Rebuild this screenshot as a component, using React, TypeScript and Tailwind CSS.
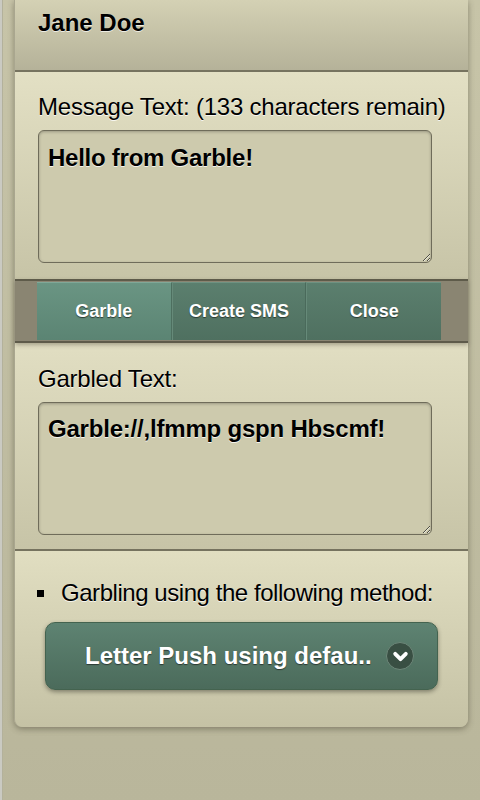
import React from "react";

const darkShadow = "[text-shadow:0_1px_1px_#2b3a33]";

function Chevron() {
  return (
    <div className="w-[28px] h-[28px] rounded-full bg-[#394f43] border border-[#6d8779] flex items-center justify-center">
      <svg width="17" height="17" viewBox="0 0 16 16">
        <polyline points="3,5.5 8,10.5 13,5.5" fill="none" stroke="#ffffff" strokeWidth="3.6" strokeLinecap="round" strokeLinejoin="round" />
      </svg>
    </div>
  );
}

export default function App() {
  return (
    <div className="h-[800px] w-[480px] overflow-hidden flex bg-gradient-to-b from-[#c7c4a8] to-[#b9b69b] font-['Liberation_Sans',Arial,sans-serif] text-black">
      <div className="w-[3px] h-full bg-[#cacac2] border-r border-[#b3b19b]" />
      <div className="ml-[11px] w-[454px] self-start flex flex-col rounded-b-[8px] border-l border-[#a9a68f] shadow-[0_2px_6px_rgba(60,55,40,0.45)]">
        {/* header */}
        <div className="h-[72px] pt-[9px] pl-[23px] bg-gradient-to-b from-[#d4d1b4] to-[#b5b299] border-b-2 border-[#76735f]">
          <div className="text-[24px] leading-[28px] font-bold [text-shadow:0_1px_0_rgba(255,255,255,0.7)]">Jane Doe</div>
        </div>

        {/* section 1 */}
        <div className="h-[207px] pt-[21px] pl-[23px] bg-gradient-to-b from-[#e3e0c4] to-[#c7c4a7]">
          <div className="text-[24px] leading-[28px] tracking-[-0.22px] whitespace-nowrap [text-shadow:0_1px_0_rgba(255,255,255,0.8)]">
            Message Text: (133 characters remain)
          </div>
          <textarea
            defaultValue="Hello from Garble!"
            className="block mt-[9px] w-[394px] h-[133px] rounded-[6px] border border-[#6f6c5a] bg-[#cdcaad] px-[9px] pt-[13px] text-[24px] leading-[28px] font-bold tracking-[-0.25px] text-black outline-none shadow-[inset_0_1px_3px_rgba(0,0,0,0.25)] [text-shadow:0_1px_0_rgba(255,255,255,0.8)] font-['Liberation_Sans',Arial,sans-serif]"
          />
        </div>

        {/* nav */}
        <div className="relative z-10 h-[64px] py-[1px] border-y-2 border-[#5e5b4a] bg-[#8a8572] shadow-[0_2px_4px_rgba(60,55,40,0.35)]">
          <div className="ml-[22px] w-[404px] h-full grid grid-cols-3">
            <div className={`flex items-center justify-center bg-gradient-to-b from-[#6a9583] to-[#5b8473] border-t border-[#80a898] border-r border-r-[#4d6f5f] text-white font-bold text-[18px] ${darkShadow}`}>
              Garble
            </div>
            <div className={`flex items-center justify-center bg-gradient-to-b from-[#5b7f6e] to-[#4f7060] border-t border-[#6f9282] border-l border-l-[#668a79] border-r border-r-[#4a6a5b] text-white font-bold text-[18px] ${darkShadow}`}>
              Create SMS
            </div>
            <div className={`flex items-center justify-center bg-gradient-to-b from-[#5b7f6e] to-[#4f7060] border-t border-[#6f9282] border-l border-l-[#668a79] text-white font-bold text-[18px] ${darkShadow}`}>
              Close
            </div>
          </div>
        </div>

        {/* section 2 */}
        <div className="h-[208px] pt-[22px] pl-[23px] bg-gradient-to-b from-[#e1dec2] to-[#c7c4a7] border-b-2 border-[#76735f]">
          <div className="text-[24px] leading-[28px] tracking-[-0.22px] whitespace-nowrap [text-shadow:0_1px_0_rgba(255,255,255,0.8)]">
            Garbled Text:
          </div>
          <textarea
            defaultValue="Garble://,lfmmp gspn Hbscmf!"
            className="block mt-[9px] w-[394px] h-[133px] rounded-[6px] border border-[#6f6c5a] bg-[#cdcaad] px-[9px] pt-[12px] text-[24px] leading-[28px] font-bold tracking-[-0.2px] text-black outline-none shadow-[inset_0_1px_3px_rgba(0,0,0,0.25)] [text-shadow:0_1px_0_rgba(255,255,255,0.8)] font-['Liberation_Sans',Arial,sans-serif]"
          />
        </div>

        {/* section 3 */}
        <div className="h-[176px] pt-[28px] bg-gradient-to-b from-[#e1dec1] to-[#c5c2a5] rounded-b-[8px]">
          <div className="flex items-center pl-[22px]">
            <span className="w-[7px] h-[7px] bg-black" />
            <span className="ml-[17px] text-[24px] leading-[28px] tracking-[-0.45px] whitespace-nowrap [text-shadow:0_1px_0_rgba(255,255,255,0.8)]">
              Garbling using the following method:
            </span>
          </div>
          <div className="mt-[15px] ml-[30px] w-[393px] h-[68px] rounded-[10px] border border-[#44634f] bg-gradient-to-b from-[#5e8372] to-[#4b6b5b] shadow-[0_2px_4px_rgba(40,40,30,0.45)] flex items-center pl-[39px]">
            <span className={`text-white font-bold text-[24px] leading-[28px] whitespace-nowrap ${darkShadow}`}>
              Letter Push using defau..
            </span>
            <div className="ml-auto mr-[23px]">
              <Chevron />
            </div>
          </div>
        </div>
      </div>
    </div>
  );
}
